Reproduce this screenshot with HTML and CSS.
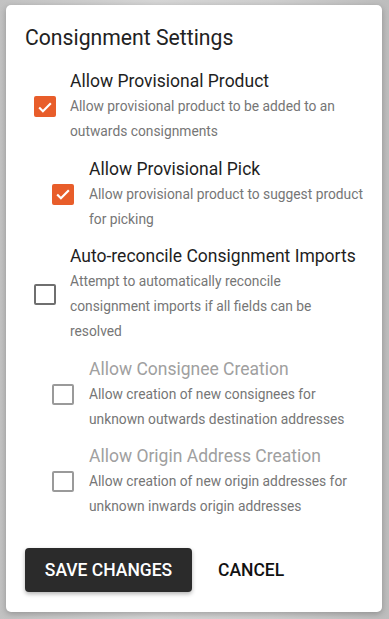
FILE: index.html
```html
<!DOCTYPE html>
<html lang="en">
<head>
    <meta charset="UTF-8">
    <meta name="viewport" content="width=device-width, initial-scale=1.0">
    <title>Consignment Settings</title>
    <link rel="stylesheet" href="styles.css">
</head>
<body>
    <div class="dialog">
        <h2 class="dialog-title">Consignment Settings</h2>

        <label class="option">
            <span class="box checked">
                <svg viewBox="0 0 24 24"><path d="M5 12.5l4.5 4.5 9.5-9.5" /></svg>
            </span>
            <span class="option-text">
                <span class="option-label">Allow Provisional Product</span>
                <span class="option-desc">Allow provisional product to be added to an outwards consignments</span>
            </span>
        </label>

        <label class="option sub">
            <span class="box checked">
                <svg viewBox="0 0 24 24"><path d="M5 12.5l4.5 4.5 9.5-9.5" /></svg>
            </span>
            <span class="option-text">
                <span class="option-label">Allow Provisional Pick</span>
                <span class="option-desc">Allow provisional product to suggest product for picking</span>
            </span>
        </label>

        <label class="option">
            <span class="box"></span>
            <span class="option-text">
                <span class="option-label">Auto-reconcile Consignment Imports</span>
                <span class="option-desc">Attempt to automatically reconcile consignment imports if all fields can be resolved</span>
            </span>
        </label>

        <label class="option sub disabled">
            <span class="box"></span>
            <span class="option-text">
                <span class="option-label">Allow Consignee Creation</span>
                <span class="option-desc">Allow creation of new consignees for unknown outwards destination addresses</span>
            </span>
        </label>

        <label class="option sub disabled">
            <span class="box"></span>
            <span class="option-text">
                <span class="option-label">Allow Origin Address Creation</span>
                <span class="option-desc">Allow creation of new origin addresses for unknown inwards origin addresses</span>
            </span>
        </label>

        <div class="actions">
            <button class="btn-save">Save Changes</button>
            <button class="btn-cancel">Cancel</button>
        </div>
    </div>
</body>
</html>
```

FILE: styles.css
```css
html, body {
    height: 100%;
}
body {
    margin: 0;
    padding: 5px 7px 7px 6px;
    box-sizing: border-box;
    font-family: Roboto, "Liberation Sans", sans-serif;
    background: linear-gradient(90deg, #c2c2c2 0%, #d6d6d6 40%, #cfcfcf 70%, #bdbdbd 100%);
}
.dialog {
    background-color: #ffffff;
    border-radius: 5px;
    box-shadow: 0 2px 6px rgba(0, 0, 0, 0.25);
    padding: 19px 19px 19px 19px;
    height: 607px;
    box-sizing: border-box;
}
.dialog-title {
    margin: 0 0 17px 0;
    font-size: 21.2px;
    font-weight: 400;
    line-height: 28px;
    color: #222222;
}
.option {
    display: flex;
    align-items: center;
    padding-left: 9px;
    margin-bottom: 12.5px;
    cursor: pointer;
}
.option.sub {
    padding-left: 27px;
}
.box {
    flex: none;
    width: 22px;
    height: 21px;
    box-sizing: border-box;
    border: 2px solid #6f6f6f;
    border-radius: 2px;
    margin-right: 14px;
    display: flex;
    align-items: center;
    justify-content: center;
}
.sub .box {
    margin-right: 15px;
}
.box.checked {
    background-color: #e85d2a;
    border-color: #e85d2a;
}
.box svg {
    width: 20px;
    height: 20px;
    flex: none;
    fill: none;
    stroke: #ffffff;
    stroke-width: 2.6;
}
.disabled .box {
    border-color: #9a9a9a;
}
.option-text {
    display: flex;
    flex-direction: column;
}
.option-label {
    font-size: 17.5px;
    line-height: 25px;
    color: #1e1e1e;
}
.option-desc {
    font-size: 13.8px;
    line-height: 25px;
    color: #767676;
}
.disabled .option-label {
    color: #a0a0a0;
}
.actions {
    display: flex;
    align-items: center;
    margin-top: 29px;
}
.btn-save {
    width: 167px;
    height: 44px;
    border: none;
    border-radius: 4px;
    background-color: #2b2b2b;
    color: #ffffff;
    font-family: Roboto, "Liberation Sans", sans-serif;
    font-size: 17.5px;
    font-weight: 500;
    text-transform: uppercase;
    box-shadow: 0 2px 4px rgba(0, 0, 0, 0.3);
    cursor: pointer;
}
.btn-cancel {
    margin-left: 10px;
    height: 44px;
    padding: 0 16px;
    border: none;
    background: none;
    color: #111111;
    font-family: Roboto, "Liberation Sans", sans-serif;
    font-size: 17.5px;
    font-weight: 500;
    text-transform: uppercase;
    cursor: pointer;
}
```
